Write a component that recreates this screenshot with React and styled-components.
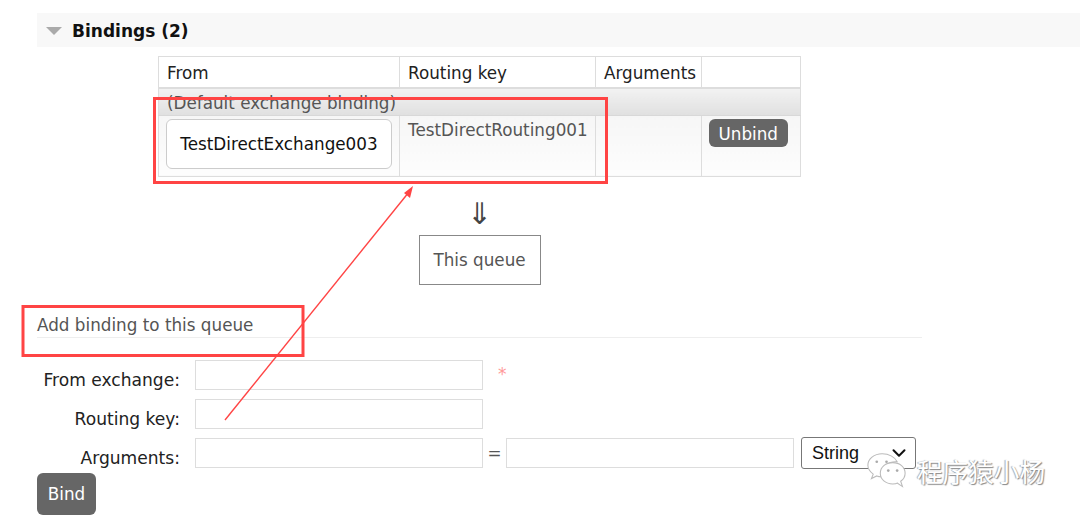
import styled, { createGlobalStyle } from 'styled-components';
import { ChevronDown } from 'lucide-react';

const GlobalStyle = createGlobalStyle`
  html, body {
    margin: 0;
    padding: 0;
    background: #fff;
  }
  body {
    font-family: "DejaVu Sans", Verdana, sans-serif;
    font-size: 16.8px;
    color: #484848;
  }
`;

const Page = styled.div`
  position: relative;
  width: 1080px;
  height: 521px;
  overflow: hidden;
  padding: 13px 0 0 37px;
  box-sizing: border-box;
`;

const SectionBar = styled.div`
  display: flex;
  align-items: center;
  gap: 10px;
  height: 34px;
  padding-left: 9px;
  background: #f8f8f8;
`;

const Triangle = styled.span`
  width: 0;
  height: 0;
  margin-top: 2px;
  border-left: 8px solid transparent;
  border-right: 8px solid transparent;
  border-top: 8px solid #aaa;
`;

const SectionTitle = styled.h2`
  margin: 0;
  padding-top: 1px;
  font-size: 17px;
  font-weight: bold;
  color: #111;
`;

const Bindings = styled.div`
  display: flex;
  flex-direction: column;
  align-items: center;
  width: 643px;
  margin: 9px 0 0 121px;
`;

const Table = styled.table`
  width: 642px;
  align-self: flex-start;
  table-layout: fixed;
  border-collapse: collapse;
  border: 1px solid #ddd;
`;

const HeadCell = styled.th`
  width: ${p => p.$w}px;
  height: 31px;
  padding: 3px 8px 0;
  box-sizing: border-box;
  border: 1px solid #ddd;
  border-bottom-width: 2px;
  font-weight: normal;
  text-align: left;
  color: #222;
  white-space: nowrap;
`;

const GroupCell = styled.td`
  height: 27px;
  padding: 2px 8px 0;
  box-sizing: border-box;
  border: 0;
  border-bottom: 1px solid #d8d8d8;
  background: linear-gradient(#f2f2f2, #e0e0e0);
  color: #555;
  line-height: 24px;
  white-space: nowrap;
`;

const Cell = styled.td`
  height: 61px;
  padding: ${p => p.$pad || '4px 8px'};
  box-sizing: border-box;
  vertical-align: top;
  border: 1px solid #ddd;
  background: linear-gradient(#f6f6f6, #fdfdfd);
  color: #555;
  white-space: nowrap;
`;

const ExchangeBox = styled.div`
  display: flex;
  align-items: center;
  justify-content: center;
  height: 50px;
  padding-top: 1px;
  box-sizing: border-box;
  border: 1px solid #ccc;
  border-radius: 6px;
  background: #fff;
  color: #111;
`;

const Unbind = styled.button`
  height: 28px;
  margin-left: -1px;
  padding: 3px 9.5px 0;
  border: 0;
  border-radius: 6px;
  background: #666;
  color: #fff;
  font: inherit;
`;

const DownArrow = styled.div`
  margin-top: 18px;
  height: 40px;
  font-family: "Liberation Sans", Arial, sans-serif;
  font-size: 30px;
  line-height: 38px;
  color: #444;
`;

const QueueBox = styled.div`
  display: flex;
  align-items: center;
  justify-content: center;
  width: 122px;
  height: 50px;
  padding-top: 1px;
  box-sizing: border-box;
  border: 1px solid #888;
  color: #555;
`;

const FormTitle = styled.h3`
  width: 885px;
  margin: 29px 0 0;
  border-bottom: 1px solid #eee;
  font-size: 16.8px;
  line-height: 23px;
  font-weight: normal;
  color: #555;
`;

const Form = styled.div`
  display: grid;
  grid-template-columns: 143px 288px;
  column-gap: 15px;
  row-gap: 9px;
  margin-top: 22px;
`;

const Label = styled.label`
  height: 30px;
  font-size: 17.1px;
  line-height: 40px;
  text-align: right;
  color: #222;
  white-space: nowrap;
`;

const FieldRow = styled.div`
  display: flex;
  align-items: center;
  width: 288px;
  height: 30px;
  white-space: nowrap;
`;

const Input = styled.input`
  flex: none;
  width: 288px;
  height: 30px;
  box-sizing: border-box;
  border: 1px solid #ddd;
  background: #fff;
`;

const Required = styled.span`
  flex: none;
  margin: -2px 0 0 15px;
  color: #f99;
  font-size: 17px;
`;

const Equals = styled.span`
  flex: none;
  width: 23px;
  text-align: center;
  color: #555;
`;

const SelectBox = styled.div`
  flex: none;
  display: flex;
  align-items: center;
  justify-content: space-between;
  width: 115px;
  height: 32px;
  margin-left: 7px;
  padding: 1px 5px 0 10px;
  box-sizing: border-box;
  border: 1px solid #777;
  border-radius: 3px;
  background: #fff;
  color: #111;
  font-family: "Liberation Sans", Arial, sans-serif;
  font-size: 18px;
`;

const BindButton = styled.button`
  display: block;
  width: 59px;
  height: 42px;
  margin-top: 5px;
  border: 0;
  border-radius: 6px;
  background: #666;
  color: #fff;
  font: inherit;
`;

const Overlay = styled.svg`
  position: absolute;
  inset: 0;
  pointer-events: none;
`;

const Watermark = styled.div`
  position: absolute;
  left: 865px;
  top: 452px;
  display: flex;
  align-items: center;
  gap: 9px;
`;

const WatermarkText = styled.span`
  margin-top: -1px;
  font-family: "Noto Sans CJK SC", sans-serif;
  font-size: 25.6px;
  line-height: 38px;
  color: #fff;
  text-shadow: 1px 1px 1px #888, -1px 0 1px #aaa;
`;

const WeChat = () => (
  <svg width="43" height="39" viewBox="0 0 46 44" fill="#fff" stroke="#bbb" strokeWidth="1.2">
    <path d="M18 2C9 2 2 8 2 15c0 4 2 7 6 10l-2 5 6-3c2 1 4 1 6 1h2c-1-2-1-3-1-5 0-7 6-12 14-12h2C33 6 26 2 18 2z" />
    <path d="M30 12c-8 0-14 5-14 12s6 12 14 12c2 0 4 0 5-1l6 4-2-6c3-2 5-5 5-9 0-7-6-12-14-12z" />
    <circle cx="12" cy="11" r="1.5" stroke="none" fill="#aaa" />
    <circle cx="23" cy="11" r="1.5" stroke="none" fill="#aaa" />
    <circle cx="25" cy="21" r="1.5" stroke="none" fill="#aaa" />
    <circle cx="35" cy="21" r="1.5" stroke="none" fill="#aaa" />
  </svg>
);

const App = () => (
  <Page>
    <GlobalStyle />
    <SectionBar>
      <Triangle />
      <SectionTitle>Bindings (2)</SectionTitle>
    </SectionBar>
    <Bindings>
      <Table>
        <thead>
          <tr>
            <HeadCell $w={241}>From</HeadCell>
            <HeadCell $w={196}>Routing key</HeadCell>
            <HeadCell $w={106}>Arguments</HeadCell>
            <HeadCell $w={99} />
          </tr>
        </thead>
        <tbody>
          <tr>
            <GroupCell colSpan={4}>(Default exchange binding)</GroupCell>
          </tr>
          <tr>
            <Cell $pad="3px 7px">
              <ExchangeBox>TestDirectExchange003</ExchangeBox>
            </Cell>
            <Cell>TestDirectRouting001</Cell>
            <Cell />
            <Cell $pad="3px 8px"><Unbind>Unbind</Unbind></Cell>
          </tr>
        </tbody>
      </Table>
      <DownArrow>⇓</DownArrow>
      <QueueBox>This queue</QueueBox>
    </Bindings>
    <FormTitle>Add binding to this queue</FormTitle>
    <Form>
      <Label>From exchange:</Label>
      <FieldRow>
        <Input />
        <Required>*</Required>
      </FieldRow>
      <Label>Routing key:</Label>
      <FieldRow>
        <Input />
      </FieldRow>
      <Label>Arguments:</Label>
      <FieldRow>
        <Input />
        <Equals>=</Equals>
        <Input />
        <SelectBox>
          String
          <ChevronDown size={22} strokeWidth={2.2} color="#111" />
        </SelectBox>
      </FieldRow>
    </Form>
    <BindButton>Bind</BindButton>

    <Overlay width="1080" height="521" viewBox="0 0 1080 521">
      <rect x="154.5" y="98.5" width="452" height="84" fill="none" stroke="#f44" strokeWidth="3" />
      <rect x="23" y="306.5" width="280" height="49" fill="none" stroke="#f44" strokeWidth="3" />
      <path d="M225 420 L409 192" stroke="#f44" strokeWidth="1.4" fill="none" />
      <path d="M413 186 L404 193 L410 198 Z" fill="#f44" />
    </Overlay>
    <Watermark>
      <WeChat />
      <WatermarkText>程序猿小杨</WatermarkText>
    </Watermark>
  </Page>
);

export default App;
